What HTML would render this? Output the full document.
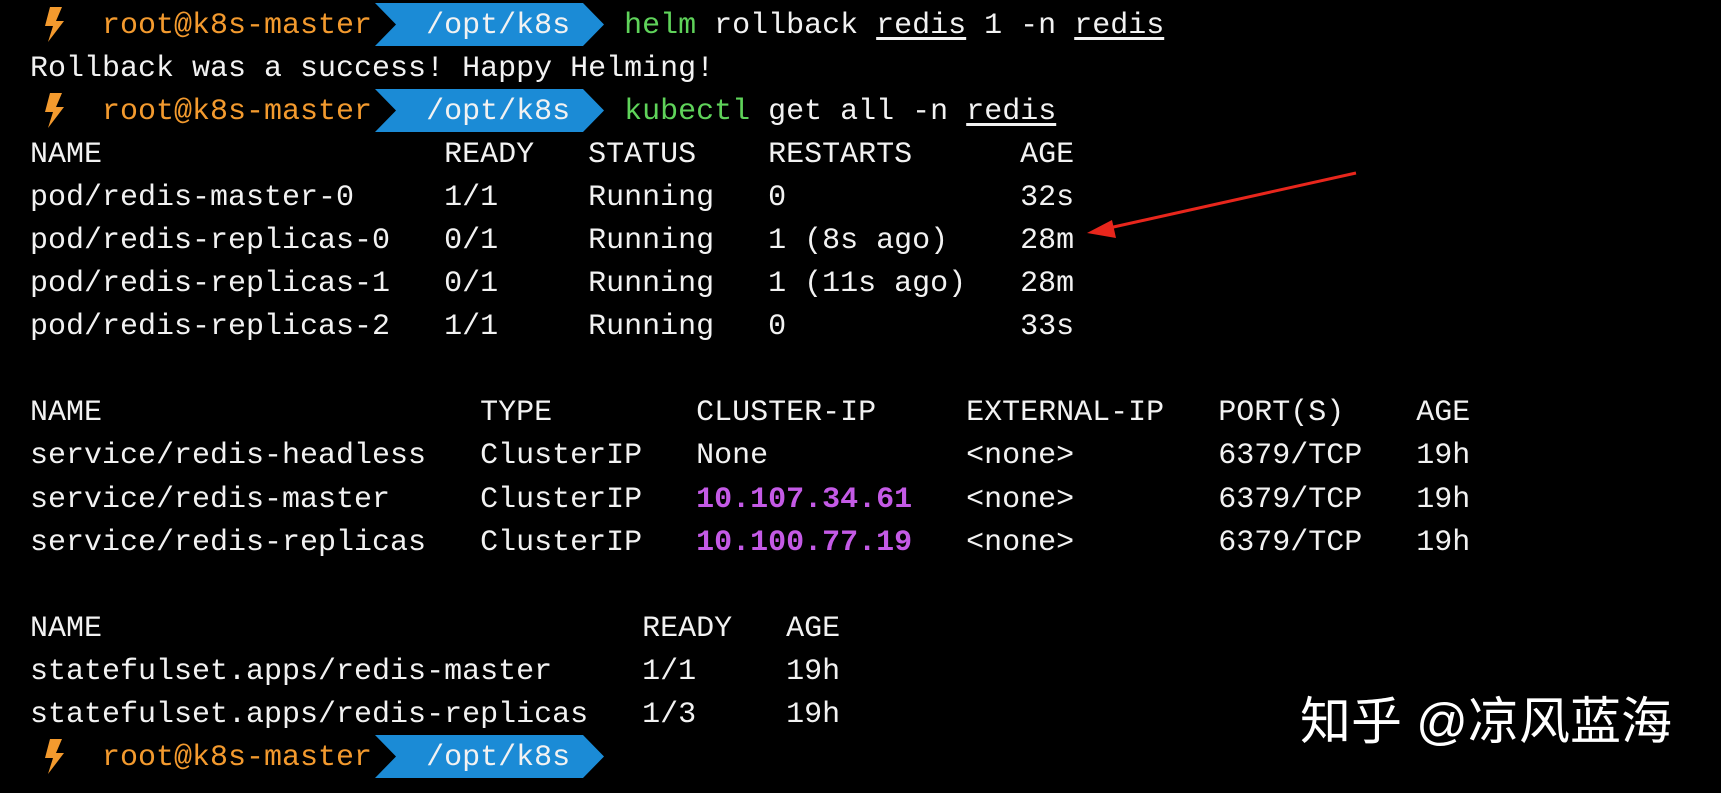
<!DOCTYPE html>
<html><head><meta charset="utf-8"><style>
html,body{margin:0;padding:0;background:#000;width:1721px;height:793px;overflow:hidden;position:relative}
pre{position:absolute;left:30px;top:5px;margin:0;font-family:"Liberation Mono",monospace;font-size:30px;line-height:43.05px;color:#f2f2f2;z-index:2}
.o{color:#f39a2e}.g{color:#5fd35a}.p{color:#c45ae6;font-weight:bold}.u{text-decoration:underline;text-underline-offset:4px}
.band{position:absolute;left:0;width:1721px;height:43px;z-index:1}
.wm{position:absolute;left:1300px;top:692px;font-family:"Liberation Sans","Noto Sans CJK SC",sans-serif;font-size:51px;color:#fff;z-index:3;line-height:60px}
</style></head><body>
<svg class="band" style="top:3px" viewBox="0 0 1721 43"><polygon points="375,0 583,0 604,21.5 583,43 375,43 396,21.5" fill="#1b8bd6"/><polygon points="50,4 62,4 56,18 64,18 48,39 53,23 45,23" fill="#f39a2e"/></svg>
<svg class="band" style="top:89px" viewBox="0 0 1721 43"><polygon points="375,0 583,0 604,21.5 583,43 375,43 396,21.5" fill="#1b8bd6"/><polygon points="50,4 62,4 56,18 64,18 48,39 53,23 45,23" fill="#f39a2e"/></svg>
<svg class="band" style="top:735px" viewBox="0 0 1721 43"><polygon points="375,0 583,0 604,21.5 583,43 375,43 396,21.5" fill="#1b8bd6"/><polygon points="50,4 62,4 56,18 64,18 48,39 53,23 45,23" fill="#f39a2e"/></svg>
<svg style="position:absolute;left:0;top:0;z-index:3" width="1721" height="793"><line x1="1356" y1="173" x2="1100" y2="230" stroke="#e8261c" stroke-width="3"/><polygon points="1087,233 1112,220 1116,238" fill="#e8261c"/></svg>
<pre>    <span class="o">root@k8s-master</span>   /opt/k8s   <span class="g">helm</span> rollback <span class="u">redis</span> 1 -n <span class="u">redis</span>
Rollback was a success! Happy Helming!
    <span class="o">root@k8s-master</span>   /opt/k8s   <span class="g">kubectl</span> get all -n <span class="u">redis</span>
NAME                   READY   STATUS    RESTARTS      AGE
pod/redis-master-0     1/1     Running   0             32s
pod/redis-replicas-0   0/1     Running   1 (8s ago)    28m
pod/redis-replicas-1   0/1     Running   1 (11s ago)   28m
pod/redis-replicas-2   1/1     Running   0             33s

NAME                     TYPE        CLUSTER-IP     EXTERNAL-IP   PORT(S)    AGE
service/redis-headless   ClusterIP   None           &lt;none&gt;        6379/TCP   19h
service/redis-master     ClusterIP   <span class="p">10.107.34.61</span>   &lt;none&gt;        6379/TCP   19h
service/redis-replicas   ClusterIP   <span class="p">10.100.77.19</span>   &lt;none&gt;        6379/TCP   19h

NAME                              READY   AGE
statefulset.apps/redis-master     1/1     19h
statefulset.apps/redis-replicas   1/3     19h
    <span class="o">root@k8s-master</span>   /opt/k8s</pre>
<div class="wm">知乎 @凉风蓝海</div>
</body></html>
